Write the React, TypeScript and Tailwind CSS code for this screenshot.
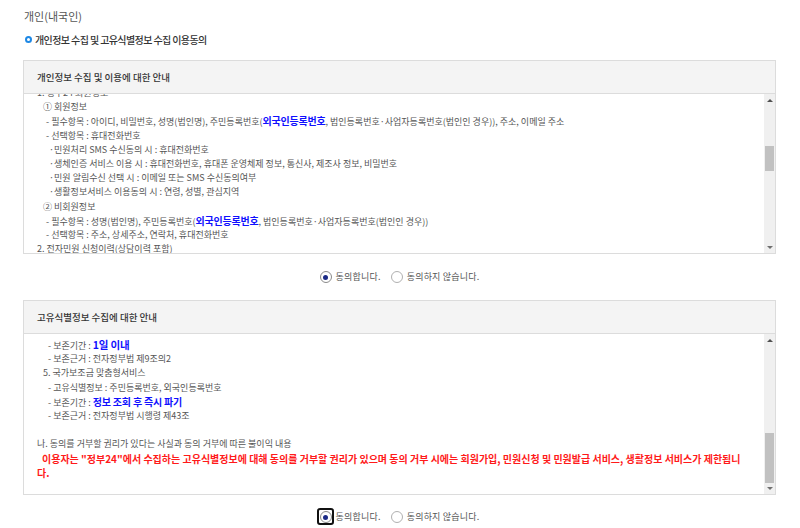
import React from "react";

const FONT = { fontFamily: '"Noto Sans CJK KR", "Noto Sans", sans-serif' };

function Blue({ children, size = "text-[10px]" }: { children: React.ReactNode; size?: string }) {
  return <span className={`${size} font-bold text-[#1010ff] tracking-[-0.2px]`}>{children}</span>;
}

function Line({ ml, children }: { ml: string; children?: React.ReactNode }) {
  return <div className={`${ml} whitespace-nowrap h-[14.2px] leading-[14.2px]`}>{children}</div>;
}

function Scrollbar({ thumbTop, thumbH }: { thumbTop: string; thumbH: string }) {
  return (
    <div className="w-[11px] shrink-0 bg-[#f0f0f0] flex flex-col items-center justify-between relative">
      <div className="h-[12px] flex items-center justify-center">
        <div className="w-0 h-0 border-l-[3px] border-r-[3px] border-b-[3px] border-l-transparent border-r-transparent border-b-[#505050]" />
      </div>
      <div className={`absolute left-[1px] right-[1px] bg-[#c1c1c1] ${thumbTop} ${thumbH}`} />
      <div className="h-[12px] flex items-center justify-center">
        <div className="w-0 h-0 border-l-[3px] border-r-[3px] border-t-[3px] border-l-transparent border-r-transparent border-t-[#707070]" />
      </div>
    </div>
  );
}

function Radio({ checked, focus }: { checked?: boolean; focus?: boolean }) {
  return (
    <span className="relative w-[12px] h-[12px] flex items-center justify-center">
      {focus && <span className="absolute -left-[3px] -top-[3px] w-[17px] h-[17px] border-2 border-[#111] rounded-[3px]" />}
      <span className={`w-[12px] h-[12px] rounded-full border bg-white flex items-center justify-center ${checked ? "border-[#8a8a8a]" : "border-[#b0b0b0]"}`}>
        {checked && <span className="w-[5px] h-[5px] rounded-full bg-[#1c2a86]" />}
      </span>
    </span>
  );
}

function RadioRow({ focus }: { focus?: boolean }) {
  return (
    <div className="flex items-center justify-center h-[14px] text-[9px] tracking-[0.2px] text-[#555]">
      <Radio checked focus={focus} />
      <span className="ml-[4px]">동의합니다.</span>
      <span className="ml-[10px]" />
      <Radio />
      <span className="ml-[4px]">동의하지 않습니다.</span>
    </div>
  );
}

export default function App() {
  return (
    <div className="w-[800px] h-[528px] bg-white overflow-hidden pl-[23px] pr-[24px] pt-[8px]" style={FONT}>
      <div className="text-[11px] leading-[16px] text-[#555] pl-[1px]">개인(내국인)</div>
      <div className="mt-[8px] flex items-center h-[14px] pl-[2px]">
        <span className="w-[7px] h-[7px] rounded-full border-2 border-[#1e88e5]" />
        <span className="ml-[3px] text-[10px] tracking-[-0.6px] font-medium text-[#333]">
          개인정보 수집 및 고유식별정보 수집 이용동의
        </span>
      </div>

      {/* Box 1 */}
      <div className="mt-[14px] border border-[#dcdcdc]">
        <div className="h-[33px] bg-[#f4f4f4] border-b border-[#dcdcdc] flex items-center pl-[13px] text-[9.5px] font-medium text-[#333]">
          개인정보 수집 및 이용에 대한 안내
        </div>
        <div className="flex h-[159px]">
          <div className="flex-1 overflow-hidden pl-[13px] text-[9px] text-[#555]">
            <div className="-mt-[8px]">
              <Line ml="ml-0">1. 정부24 회원정보</Line>
              <Line ml="ml-[6px]">① 회원정보</Line>
              <Line ml="ml-[9px]">
                - 필수항목 : 아이디, 비밀번호, 성명(법인명), 주민등록번호(<Blue>외국인등록번호</Blue>, 법인등록번호·사업자등록번호(법인인 경우)), 주소, 이메일 주소
              </Line>
              <Line ml="ml-[9px]">- 선택항목 : 휴대전화번호</Line>
              <Line ml="ml-[12px]">·민원처리 SMS 수신동의 시 : 휴대전화번호</Line>
              <Line ml="ml-[12px]">·생체인증 서비스 이용 시 : 휴대전화번호, 휴대폰 운영체제 정보, 통신사, 제조사 정보, 비밀번호</Line>
              <Line ml="ml-[12px]">·민원 알림수신 선택 시 : 이메일 또는 SMS 수신동의여부</Line>
              <Line ml="ml-[12px]">·생활정보서비스 이용동의 시 : 연령, 성별, 관심지역</Line>
              <Line ml="ml-[6px]">② 비회원정보</Line>
              <Line ml="ml-[9px]">
                - 필수항목 : 성명(법인명), 주민등록번호(<Blue>외국인등록번호</Blue>, 법인등록번호·사업자등록번호(법인인 경우))
              </Line>
              <Line ml="ml-[9px]">- 선택항목 : 주소, 상세주소, 연락처, 휴대전화번호</Line>
              <Line ml="ml-0">2. 전자민원 신청이력(상담이력 포함)</Line>
              <Line ml="ml-[9px]">- 필수항목 : 신청인 정보, 신청 민원 내역</Line>
            </div>
          </div>
          <Scrollbar thumbTop="top-[52px]" thumbH="h-[25px]" />
        </div>
      </div>

      <div className="mt-[16px]">
        <RadioRow />
      </div>

      {/* Box 2 */}
      <div className="mt-[16px] border border-[#dcdcdc]">
        <div className="h-[33px] bg-[#f4f4f4] border-b border-[#dcdcdc] flex items-center pl-[13px] text-[9.5px] font-medium text-[#333]">
          고유식별정보 수집에 대한 안내
        </div>
        <div className="flex h-[160px]">
          <div className="flex-1 overflow-hidden pl-[13px] pt-[4px] text-[9px] text-[#555]">
            <Line ml="ml-[11px]">
              - 보존기간 : <Blue size="text-[10.5px]">1일 이내</Blue>
            </Line>
            <Line ml="ml-[11px]">- 보존근거 : 전자정부법 제9조의2</Line>
            <Line ml="ml-[6px]">5. 국가보조금 맞춤형서비스</Line>
            <Line ml="ml-[11px]">- 고유식별정보 : 주민등록번호, 외국인등록번호</Line>
            <Line ml="ml-[11px]">
              - 보존기간 : <Blue size="text-[10px]">정보 조회 후 즉시 파기</Blue>
            </Line>
            <Line ml="ml-[11px]">- 보존근거 : 전자정부법 시행령 제43조</Line>
            <Line ml="ml-0"></Line>
            <Line ml="ml-0">나. 동의를 거부할 권리가 있다는 사실과 동의 거부에 따른 불이익 내용</Line>
            <Line ml="ml-[5px]">
              <span className="text-[10px] font-bold text-[#ff1a1a]">
                이용자는 "정부24"에서 수집하는 고유식별정보에 대해 동의를 거부할 권리가 있으며 동의 거부 시에는 회원가입, 민원신청 및 민원발급 서비스, 생활정보 서비스가 제한됩니
              </span>
            </Line>
            <Line ml="ml-0">
              <span className="text-[10px] font-bold text-[#ff1a1a]">다.</span>
            </Line>
          </div>
          <Scrollbar thumbTop="top-[99px]" thumbH="h-[50px]" />
        </div>
      </div>

      <div className="mt-[15px]">
        <RadioRow focus />
      </div>
    </div>
  );
}
